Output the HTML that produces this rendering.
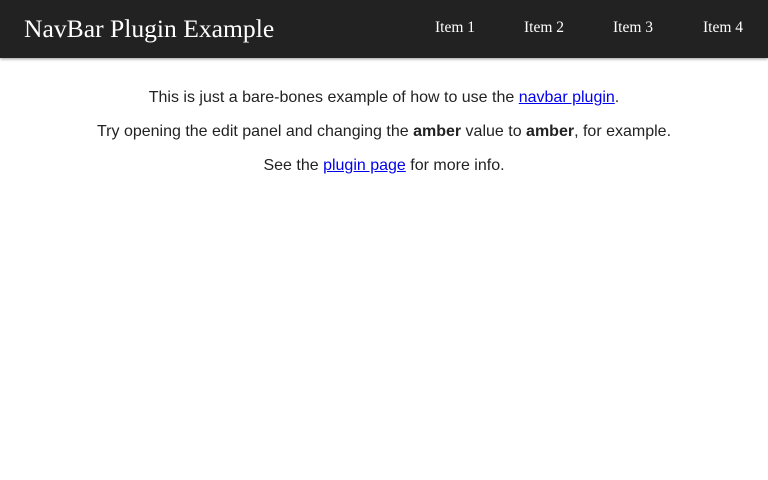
<!DOCTYPE html>
<html><head><style>
body{margin:0;background:#fff;font-family:"Liberation Sans",sans-serif;}
.nav{height:58px;background:#222;box-shadow:0 1px 3px rgba(0,0,0,.4);position:relative;color:#fff;font-family:"Liberation Serif",serif;}
.brand{position:absolute;left:24px;top:14px;font-size:25.6px;line-height:30px;}
.it{position:absolute;top:18px;font-size:15.5px;line-height:20px;}
.c{text-align:center;font-size:16px;color:#222;}
.c p{margin:0;position:absolute;left:0;right:0;line-height:20px;}
a{color:#00e;}
</style></head><body>
<div class="nav"><div class="brand">NavBar Plugin Example</div>
<div class="it" style="left:435px">Item 1</div>
<div class="it" style="left:524px">Item 2</div>
<div class="it" style="left:613px">Item 3</div>
<div class="it" style="left:703px">Item 4</div></div>
<div class="c">
<p style="top:88px">This is just a bare-bones example of how to use the <a href="#">navbar plugin</a>.</p>
<p style="top:122px">Try opening the edit panel and changing the <b>amber</b> value to <b>amber</b>, for example.</p>
<p style="top:156px">See the <a href="#">plugin page</a> for more info.</p>
</div>
</body></html>
